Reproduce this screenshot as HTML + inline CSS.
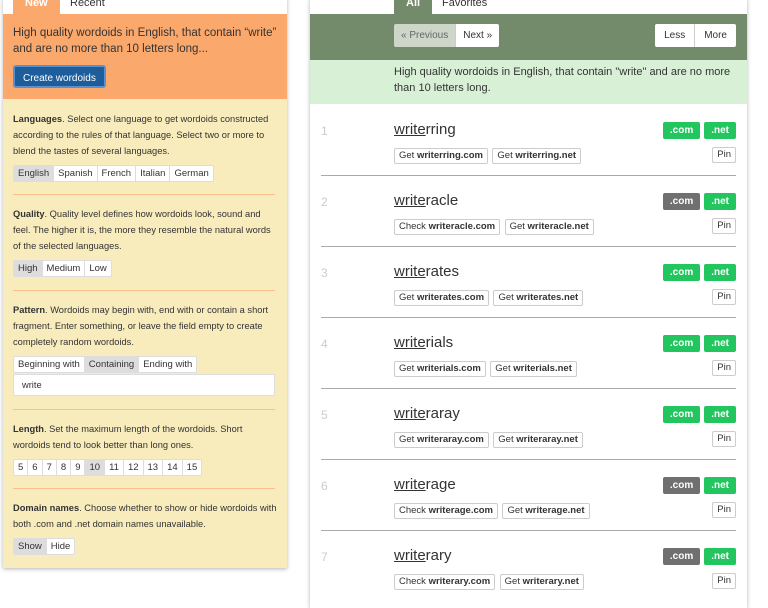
<!DOCTYPE html>
<html><head><meta charset="utf-8"><style>
*{box-sizing:border-box;margin:0;padding:0}
body{width:768px;height:601px;overflow:hidden;background:#fff;font-family:"Liberation Sans",sans-serif;color:#333;position:relative}
.lp{position:absolute;left:3px;top:-2px;width:284px;height:570px;background:#f8ecbd;box-shadow:0 1px 4px rgba(0,0,0,.3)}
.tabs{height:16px;background:#fff;position:relative}
.tab{position:absolute;top:0;height:16px;font-size:11px;line-height:10px;padding:0 12px}
.or{background:#fba86c;height:85px;padding:11px 10px 0;font-size:11.5px;line-height:16px;color:#333}
.cbtn{display:inline-block;margin-top:8px;background:#1d5d9c;color:#fff;font-size:10px;padding:0 8px;height:23px;line-height:23px;border:2px solid #5a8fd0;border-radius:3px}
.sec{padding:0 10px;font-size:9.3px;line-height:16px;position:absolute;left:0;width:284px}
.sec b{color:#333}
.g{display:inline-flex;border:1px solid #ddd;border-radius:2px;background:#fff;margin-top:6px}
.g span{padding:0 4px;height:15px;line-height:15px;border-right:1px solid #ddd;font-size:9.5px}
.g span:last-child{border-right:0}
.g .a{background:#ddd}
.hr{position:absolute;left:10px;width:262px;height:1px;background:#f9c08a}
.inp{background:#fff;border:1px solid #ddd;border-radius:2px;height:22px;line-height:20px;padding-left:8px;font-size:9.3px;margin-top:1px;width:262px}
.rp{position:absolute;left:310px;top:-2px;width:437px;height:610px;background:#fff;box-shadow:0 1px 4px rgba(0,0,0,.3)}
.gh{position:absolute;top:16px;left:0;width:437px;height:46px;background:#738b6b}
.lg{position:absolute;top:62px;left:0;width:437px;height:44px;background:#d8f0d6;padding:4px 0 0 84px;font-size:11px;line-height:16px}
.b{display:inline-block;border:1px solid #ccc;background:#fff;font-size:9.5px;height:16px;line-height:14px;padding:0 4px;border-radius:2px;white-space:nowrap}
.pg{position:absolute;display:flex;border-radius:2px;overflow:hidden}
.pg span{background:#fff;font-size:10px;height:23px;line-height:23px;padding:0 7px;border-right:1px solid #ccc}
.row{position:absolute;left:0;width:437px;height:71px}
.num{position:absolute;left:11px;top:19px;font-size:12px;color:#ccc}
.w{position:absolute;left:84px;top:16px;font-size:15px;color:#333}
.w u{text-decoration:underline}
.bt{position:absolute;left:84px;top:40px}
.dm{position:absolute;right:11px;top:17px;display:flex;gap:4px}
.dm span{color:#fff;font-weight:bold;font-size:10px;height:17px;line-height:17px;padding:0 7px;border-radius:2px;background:#22c55e}
.dm .x{background:#707070}
.pin{position:absolute;right:11px;top:42px}
.sep{position:absolute;left:11px;right:11px;bottom:0;height:1px;background:#aaa}
</style></head><body>
<div class="lp">
 <div class="tabs"><div class="tab" style="left:10px;background:#fba86c;color:#fff;font-weight:bold">New</div><div class="tab" style="left:55px">Recent</div></div>
 <div class="or">High quality wordoids in English, that contain “write” and are no more than 10 letters long...<br><span class="cbtn">Create wordoids</span></div>
 <div class="sec" style="top:113px"><b>Languages</b>. Select one language to get wordoids constructed according to the rules of that language. Select two or more to blend the tastes of several languages.<br><div class="g"><span class="a">English</span><span>Spanish</span><span>French</span><span>Italian</span><span>German</span></div></div>
 <div class="hr" style="top:196px"></div>
 <div class="sec" style="top:208px"><b>Quality</b>. Quality level defines how wordoids look, sound and feel. The higher it is, the more they resemble the natural words of the selected languages.<br><div class="g"><span class="a">High</span><span>Medium</span><span>Low</span></div></div>
 <div class="hr" style="top:292px"></div>
 <div class="sec" style="top:304px"><b>Pattern</b>. Wordoids may begin with, end with or contain a short fragment. Enter something, or leave the field empty to create completely random wordoids.<br><div class="g"><span>Beginning with</span><span class="a">Containing</span><span>Ending with</span></div><div class="inp">write</div></div>
 <div class="hr" style="top:411px"></div>
 <div class="sec" style="top:423px"><b>Length</b>. Set the maximum length of the wordoids. Short wordoids tend to look better than long ones.<br><div class="g"><span>5</span><span>6</span><span>7</span><span>8</span><span>9</span><span class="a">10</span><span>11</span><span>12</span><span>13</span><span>14</span><span>15</span></div></div>
 <div class="hr" style="top:490px"></div>
 <div class="sec" style="top:502px"><b>Domain names</b>. Choose whether to show or hide wordoids with both .com and .net domain names unavailable.<br><div class="g"><span class="a">Show</span><span>Hide</span></div></div>
</div>
<div class="rp">
 <div class="tabs"><div class="tab" style="left:84px;background:#738b6b;color:#fff;font-weight:bold;padding:0 12px">All</div><div class="tab" style="left:120px">Favorites</div></div>
 <div class="gh">
  <div class="pg" style="left:84px;top:10px"><span style="background:#cdd6c9;color:#666">« Previous</span><span style="border:0">Next »</span></div>
  <div class="pg" style="right:11px;top:10px"><span style="padding:0 9px">Less</span><span style="border:0;padding:0 9px">More</span></div>
 </div>
 <div class="lg">High quality wordoids in English, that contain "write" and are no more than 10 letters long.</div>
 <div class="row" style="top:107px"><div class="num">1</div><div class="w"><u>write</u>rring</div><div class="bt"><span class="b">Get <b>writerring.com</b></span> <span class="b">Get <b>writerring.net</b></span></div><div class="dm"><span>.com</span><span>.net</span></div><div class="pin b">Pin</div><div class="sep"></div></div>
 <div class="row" style="top:178px"><div class="num">2</div><div class="w"><u>write</u>racle</div><div class="bt"><span class="b">Check <b>writeracle.com</b></span> <span class="b">Get <b>writeracle.net</b></span></div><div class="dm"><span class="x">.com</span><span>.net</span></div><div class="pin b">Pin</div><div class="sep"></div></div>
 <div class="row" style="top:249px"><div class="num">3</div><div class="w"><u>write</u>rates</div><div class="bt"><span class="b">Get <b>writerates.com</b></span> <span class="b">Get <b>writerates.net</b></span></div><div class="dm"><span>.com</span><span>.net</span></div><div class="pin b">Pin</div><div class="sep"></div></div>
 <div class="row" style="top:320px"><div class="num">4</div><div class="w"><u>write</u>rials</div><div class="bt"><span class="b">Get <b>writerials.com</b></span> <span class="b">Get <b>writerials.net</b></span></div><div class="dm"><span>.com</span><span>.net</span></div><div class="pin b">Pin</div><div class="sep"></div></div>
 <div class="row" style="top:391px"><div class="num">5</div><div class="w"><u>write</u>raray</div><div class="bt"><span class="b">Get <b>writeraray.com</b></span> <span class="b">Get <b>writeraray.net</b></span></div><div class="dm"><span>.com</span><span>.net</span></div><div class="pin b">Pin</div><div class="sep"></div></div>
 <div class="row" style="top:462px"><div class="num">6</div><div class="w"><u>write</u>rage</div><div class="bt"><span class="b">Check <b>writerage.com</b></span> <span class="b">Get <b>writerage.net</b></span></div><div class="dm"><span class="x">.com</span><span>.net</span></div><div class="pin b">Pin</div><div class="sep"></div></div>
 <div class="row" style="top:533px"><div class="num">7</div><div class="w"><u>write</u>rary</div><div class="bt"><span class="b">Check <b>writerary.com</b></span> <span class="b">Get <b>writerary.net</b></span></div><div class="dm"><span class="x">.com</span><span>.net</span></div><div class="pin b">Pin</div></div>
</div>
</body></html>
